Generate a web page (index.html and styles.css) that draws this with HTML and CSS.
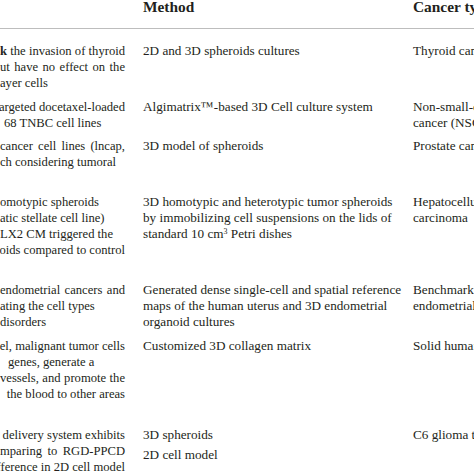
FILE: index.html
```html
<!DOCTYPE html>
<html lang="en">
<head>
<meta charset="utf-8">
<title>3D culture studies table</title>
<link rel="stylesheet" href="styles.css">
</head>
<body>
<div class="table">
  <div class="head">
    <div class="h"></div>
    <div class="h">Method</div>
    <div class="h">Cancer type</div>
  </div>
  <div class="rows">
    <!-- row 1 -->
    <div class="c1">
      <div class="ln j"><span><b>k</b> the invasion of thyroid</span></div>
      <div class="ln j"><span>ut have no effect on the</span></div>
      <div class="ln">ayer cells</div>
    </div>
    <div class="c2"><div class="ln">2D and 3D spheroids cultures</div></div>
    <div class="c3"><div class="ln">Thyroid cancer</div></div>

    <!-- row 2 -->
    <div class="c1">
      <div class="ln j"><span>argeted docetaxel-loaded</span></div>
      <div class="ln i4">68 TNBC cell lines</div>
    </div>
    <div class="c2"><div class="ln">Algimatrix™-based 3D Cell culture system</div></div>
    <div class="c3">
      <div class="ln">Non-small-cell lung</div>
      <div class="ln">cancer (NSCLC)</div>
    </div>

    <!-- row 3 -->
    <div class="c1 tight-top">
      <div class="ln j"><span>cancer cell lines (lncap,</span></div>
      <div class="ln">ch considering tumoral</div>
      <div class="ln">&nbsp;</div>
    </div>
    <div class="c2 tight-top"><div class="ln">3D model of spheroids</div></div>
    <div class="c3 tight-top"><div class="ln">Prostate cancer</div></div>

    <!-- row 4 -->
    <div class="c1">
      <div class="ln">omotypic spheroids</div>
      <div class="ln">atic stellate cell line)</div>
      <div class="ln">LX2 CM triggered the</div>
      <div class="ln j"><span>oids compared to control</span></div>
      <div class="ln">&nbsp;</div>
    </div>
    <div class="c2">
      <div class="ln">3D homotypic and heterotypic tumor spheroids</div>
      <div class="ln">by immobilizing cell suspensions on the lids of</div>
      <div class="ln">standard 10 cm<sup>3</sup> Petri dishes</div>
    </div>
    <div class="c3">
      <div class="ln">Hepatocellular</div>
      <div class="ln">carcinoma</div>
    </div>

    <!-- row 5 -->
    <div class="c1">
      <div class="ln j"><span>endometrial cancers and</span></div>
      <div class="ln">ating the cell types</div>
      <div class="ln">disorders</div>
    </div>
    <div class="c2">
      <div class="ln">Generated dense single-cell and spatial reference</div>
      <div class="ln">maps of the human uterus and 3D endometrial</div>
      <div class="ln">organoid cultures</div>
    </div>
    <div class="c3">
      <div class="ln">Benchmark</div>
      <div class="ln">endometrial cancer</div>
    </div>

    <!-- row 6 -->
    <div class="c1">
      <div class="ln j"><span>el, malignant tumor cells</span></div>
      <div class="ln i8">genes, generate a</div>
      <div class="ln j"><span>vessels, and promote the</span></div>
      <div class="ln j p7"><span>the blood to other areas</span></div>
      <div class="ln">&nbsp;</div>
    </div>
    <div class="c2"><div class="ln">Customized 3D collagen matrix</div></div>
    <div class="c3"><div class="ln">Solid human tumors</div></div>

    <!-- row 7 -->
    <div class="c1 loose-top">
      <div class="ln j p3"><span>delivery system exhibits</span></div>
      <div class="ln j"><span>mparing to RGD-PPCD</span></div>
      <div class="ln j"><span>fference in 2D cell model</span></div>
    </div>
    <div class="c2 loose-top">
      <div class="ln">3D spheroids</div>
      <div class="ln sub">2D cell model</div>
    </div>
    <div class="c3 loose-top"><div class="ln">C6 glioma tumor</div></div>
  </div>
</div>
</body>
</html>
```

FILE: styles.css
```css
html, body {
  margin: 0;
  padding: 0;
  overflow: hidden;
  background: #ffffff;
}

body {
  width: 474px;
  height: 474px;
  font-family: "Liberation Serif", "Times New Roman", serif;
  color: #231f20;
}

.head {
  display: grid;
  grid-template-columns: 125px 252px 1fr;
  column-gap: 18px;
  margin-top: -2.5px;
  padding-bottom: 12.5px;
  border-bottom: 1px solid #bdbdbd;
  font-weight: bold;
  font-size: 15.4px;
  line-height: 18px;
  white-space: nowrap;
}

.rows {
  display: grid;
  grid-template-columns: 125px 252px 1fr;
  column-gap: 18px;
  row-gap: 8px;
  padding-top: 14px;
  font-size: 13.2px;
  line-height: 16px;
}

.c1 {
  font-size: 12.6px;
}

.tight-top {
  margin-top: -1.5px;
}

.loose-top {
  margin-top: 1px;
}

.ln {
  white-space: nowrap;
}

.j {
  display: flex;
  justify-content: flex-end;
  white-space: normal;
}

.j > span {
  flex: 0 0 auto;
  min-width: 100%;
  box-sizing: border-box;
  text-align: justify;
  text-align-last: justify;
}

.p7 > span {
  padding-left: 7px;
}

.p3 > span {
  padding-left: 3px;
}

.i4 {
  padding-left: 4px;
}

.i8 {
  padding-left: 8px;
}

.sub {
  margin-top: 4.5px;
}

sup {
  font-size: 0.6em;
  line-height: 0;
  vertical-align: 0.55em;
}
```
